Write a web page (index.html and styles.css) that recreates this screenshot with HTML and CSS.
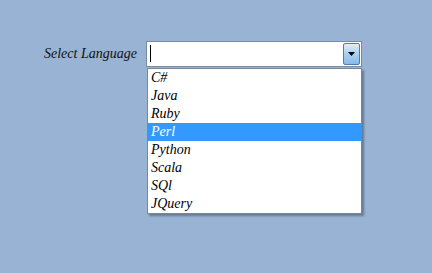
FILE: index.html
```html
<!DOCTYPE html>
<html>
<head>
<meta charset="utf-8">
<link rel="stylesheet" href="styles.css">
</head>
<body>
<div class="page">
  <div class="field">
    <label class="label">Select Language</label>
    <div class="combo">
      <div class="input"><span class="caret"></span></div>
      <div class="btn">
        <svg width="7" height="4" viewBox="0 0 7 4"><path d="M0 0H7L3.5 4Z" fill="#000"/></svg>
      </div>
      <ul class="list">
        <li>C#</li>
        <li>Java</li>
        <li>Ruby</li>
        <li class="sel">Perl</li>
        <li>Python</li>
        <li>Scala</li>
        <li>SQl</li>
        <li>JQuery</li>
      </ul>
    </div>
  </div>
</div>
</body>
</html>
```
FILE: styles.css
```css
html, body {
  margin: 0;
  padding: 0;
  background: #98b3d3;
  height: 100%;
}
.page {
  padding: 41px 0 0 44px;
  font-family: "Liberation Serif", serif;
  font-style: italic;
}
.field {
  display: flex;
  align-items: flex-start;
}
.label {
  font-size: 14px;
  color: #111;
  width: 102px;
  line-height: 26px;
}
.combo {
  position: relative;
  width: 216px;
  height: 26px;
  display: flex;
  box-sizing: border-box;
  border: 1px solid #7a8aa0;
  background: #fff;
}
.input {
  flex: 1;
  position: relative;
}
.caret {
  position: absolute;
  left: 3px;
  top: 3px;
  width: 1px;
  height: 17px;
  background: #000;
}
.btn {
  width: 15px;
  margin: 1px 1px 1px 0;
  border: 1px solid #4f7ca8;
  border-radius: 2px;
  background: linear-gradient(#dfeefa, #a9d0ef 50%, #86bbe6);
  display: flex;
  align-items: center;
  justify-content: center;
}
.list {
  position: absolute;
  left: 0;
  top: 26px;
  width: 215px;
  margin: 0;
  padding: 0;
  list-style: none;
  background: #fff;
  border: 1px solid #7c8796;
  box-sizing: border-box;
  box-shadow: 2px 2px 2px rgba(40, 50, 70, 0.45);
}
.list li {
  height: 18px;
  line-height: 18px;
  font-size: 14px;
  padding-left: 3px;
  color: #000;
}
.list li.sel {
  background: #3399ff;
  color: #fff;
}
```
